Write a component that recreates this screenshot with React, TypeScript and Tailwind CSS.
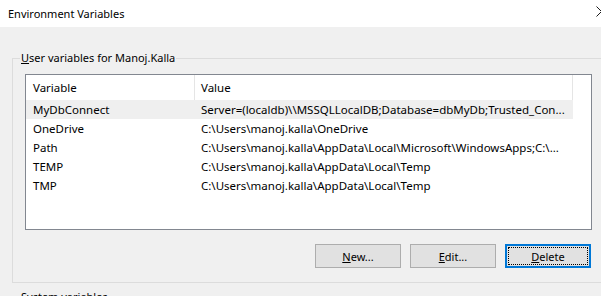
import type { ReactNode } from "react";

const rows = [
  {
    name: "MyDbConnect",
    value: "Server=(localdb)\\\\MSSQLLocalDB;Database=dbMyDb;Trusted_Con...",
    selected: true,
  },
  { name: "OneDrive", value: "C:\\Users\\manoj.kalla\\OneDrive" },
  {
    name: "Path",
    value: "C:\\Users\\manoj.kalla\\AppData\\Local\\Microsoft\\WindowsApps;C:\\...",
  },
  { name: "TEMP", value: "C:\\Users\\manoj.kalla\\AppData\\Local\\Temp" },
  { name: "TMP", value: "C:\\Users\\manoj.kalla\\AppData\\Local\\Temp" },
];

function Btn({
  children,
  focused,
}: {
  children: ReactNode;
  focused?: boolean;
}) {
  return (
    <button
      type="button"
      className={
        "flex h-[24px] w-[86px] items-center justify-center bg-[#e1e1e1] leading-none " +
        (focused
          ? "border-2 border-[#0078d7] outline-1 outline-dotted outline-black -outline-offset-4"
          : "border border-[#adadad]")
      }
    >
      {children}
    </button>
  );
}

export default function App() {
  return (
    <div className="relative h-[296px] w-[601px] overflow-hidden bg-[#f0f0f0] font-['Segoe_UI','Noto_Sans',sans-serif] text-[11px] leading-[16px] text-black">
      {/* Barra de título */}
      <div className="relative flex h-[27px] items-center bg-white pl-2">
        <span>Environment Variables</span>
        <svg
          className="absolute left-[596px] top-[6px]"
          width="11"
          height="11"
          viewBox="0 0 11 11"
        >
          <path d="M0.5 0.5 L10.5 10.5 M10.5 0.5 L0.5 10.5" stroke="#1a1a1a" strokeWidth="1" fill="none" />
        </svg>
      </div>

      <div className="pl-3 pt-[23px]">
        <fieldset className="w-[610px] border border-[#dcdcdc] px-[7px] pb-[14px] pt-[8px]">
          <legend className="px-[1px]">
            <span className="underline">U</span>ser variables for Manoj.Kalla
          </legend>

          <div className="ml-[5px] w-[567px]">
            {/* Lista */}
            <div className="h-[156px] border border-[#828790] bg-white text-[11.5px]">
              <div className="flex h-[25px]">
                <div className="flex w-[169px] items-center border-r border-[#e5e5e5] pl-[7px]">
                  Variable
                </div>
                <div className="flex w-[378px] items-center border-r border-[#e5e5e5] pl-[6px]">
                  Value
                </div>
              </div>
              {rows.map((r) => (
                <div
                  key={r.name}
                  className={
                    "flex h-[19px] w-[547px] items-center " +
                    (r.selected ? "bg-[#efefef]" : "")
                  }
                >
                  <div className="w-[169px] pl-[7px]">{r.name}</div>
                  <div className="w-[378px] whitespace-nowrap pl-[6px]">{r.value}</div>
                </div>
              ))}
            </div>

            {/* Botones */}
            <div className="mt-[14px] flex justify-end gap-[9px] pr-[1px]">
              <Btn>
                <span className="underline">N</span>ew...
              </Btn>
              <Btn>
                <span className="underline">E</span>dit...
              </Btn>
              <Btn focused>
                <span className="underline">D</span>elete
              </Btn>
            </div>
          </div>
        </fieldset>

        <fieldset className="mt-[6px] h-[60px] w-[610px] border border-[#dcdcdc] px-[7px]">
          <legend className="px-[1px]">
            <span className="underline">S</span>ystem variables
          </legend>
        </fieldset>
      </div>
    </div>
  );
}
